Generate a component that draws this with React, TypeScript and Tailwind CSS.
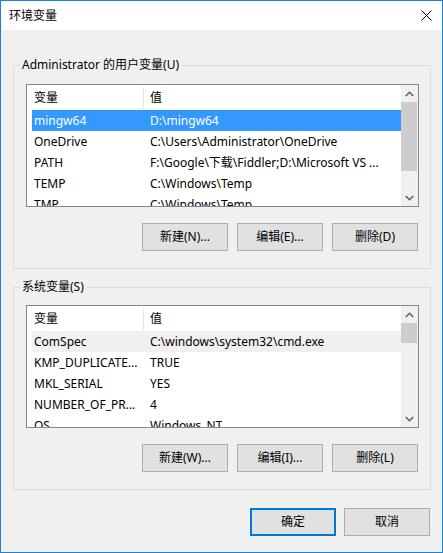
import React from "react";

const FONT = "font-['Segoe_UI','Noto_Sans','Noto_Sans_CJK_SC',sans-serif]";

type Row = { name: string; value: string; state?: "sel" | "hover" };

function Chevron({ up }: { up?: boolean }) {
  return (
    <svg width="9" height="6" viewBox="0 0 9 6" className="block">
      {up ? (
        <polyline points="0.8,5 4.5,1.3 8.2,5" fill="none" stroke="#606060" strokeWidth="1.6" />
      ) : (
        <polyline points="0.8,1 4.5,4.7 8.2,1" fill="none" stroke="#606060" strokeWidth="1.6" />
      )}
    </svg>
  );
}

function ListView({ rows, thumbH }: { rows: Row[]; thumbH: number }) {
  return (
    <div className="h-[123px] border border-[#828790] bg-white flex overflow-hidden">
      <div className="flex-1 min-w-0 overflow-hidden pl-[5px]">
        <div className="h-[25px] flex items-center">
          <div className="w-[111px] pl-[2px] whitespace-nowrap">变量</div>
          <div className="w-px h-[22px] bg-[#e5e5e5]" />
          <div className="pl-[6px] whitespace-nowrap">值</div>
        </div>
        {rows.map((r, i) => (
          <div
            key={i}
            className={
              "h-[21px] flex items-center " +
              (r.state === "sel"
                ? "bg-[#3399ff] text-white"
                : r.state === "hover"
                ? "bg-[#f0f0f0]"
                : "")
            }
          >
            <div className="w-[112px] shrink-0 pl-[2px] whitespace-nowrap overflow-hidden">{r.name}</div>
            <div className="pl-[6px] whitespace-nowrap overflow-hidden">{r.value}</div>
          </div>
        ))}
      </div>
      <div className="w-[17px] bg-[#f0f0f0] flex flex-col shrink-0">
        <div className="h-[17px] flex items-center justify-center">
          <Chevron up />
        </div>
        <div className="bg-[#cdcdcd] mr-[1px]" style={{ height: thumbH }} />
        <div className="flex-1" />
        <div className="h-[17px] flex items-center justify-center">
          <Chevron />
        </div>
      </div>
    </div>
  );
}

function Btn({ children, primary }: { children: React.ReactNode; primary?: boolean }) {
  return (
    <div
      className={
        "w-[86px] h-[28px] bg-[#e1e1e1] flex items-center justify-center whitespace-nowrap " +
        (primary ? "border-2 border-[#0078d7]" : "border border-[#adadad]")
      }
    >
      {children}
    </div>
  );
}

function Group({
  label,
  labelW,
  rows,
  thumbH,
  buttons,
  pt,
}: {
  label: string;
  labelW?: number;
  rows: Row[];
  thumbH: number;
  buttons: string[];
  pt: string;
}) {
  return (
    <div className={"relative border border-[#dcdcdc] pl-[12px] pr-[11px] pb-[17px] " + pt}>
      <div className="absolute left-[6px] top-[-9px] h-[16px] leading-[16px] px-[2px] bg-[#f0f0f0] whitespace-nowrap">
        {label}
      </div>
      <ListView rows={rows} thumbH={thumbH} />
      <div className="mt-[16px] flex justify-end gap-[9px] pr-[1px]">
        {buttons.map((b) => (
          <Btn key={b}>{b}</Btn>
        ))}
      </div>
    </div>
  );
}

export default function App() {
  const userRows: Row[] = [
    { name: "mingw64", value: "D:\\mingw64", state: "sel" },
    { name: "OneDrive", value: "C:\\Users\\Administrator\\OneDrive" },
    { name: "PATH", value: "F:\\Google\\下载\\Fiddler;D:\\Microsoft VS ..." },
    { name: "TEMP", value: "C:\\Windows\\Temp" },
    { name: "TMP", value: "C:\\Windows\\Temp" },
  ];
  const sysRows: Row[] = [
    { name: "ComSpec", value: "C:\\windows\\system32\\cmd.exe", state: "hover" },
    { name: "KMP_DUPLICATE...", value: "TRUE" },
    { name: "MKL_SERIAL", value: "YES" },
    { name: "NUMBER_OF_PR...", value: "4" },
    { name: "OS", value: "Windows_NT" },
  ];
  return (
    <div className={"w-[443px] h-[553px] border border-[#1883d7] bg-[#f0f0f0] flex flex-col text-[12px] text-black " + FONT}>
      <div className="h-[29px] bg-white flex items-center justify-between pl-[8px] pr-[10px]">
        <span className="text-[12px]">环境变量</span>
        <svg width="11" height="11" viewBox="0 0 11 11">
          <path d="M0.5 0.5 L10.5 10.5 M10.5 0.5 L0.5 10.5" stroke="#000" strokeWidth="1" />
        </svg>
      </div>
      <div className="flex flex-col pl-[12px] pr-[11px] pt-[35px]">
        <Group
          label="Administrator 的用户变量(U)"
          rows={userRows}
          thumbH={69}
          buttons={["新建(N)...", "编辑(E)...", "删除(D)"]}
          pt="pt-[18px]"
        />
        <div className="h-[18px]" />
        <Group
          label="系统变量(S)"
          rows={sysRows}
          thumbH={20}
          buttons={["新建(W)...", "编辑(I)...", "删除(L)"]}
          pt="pt-[17px]"
        />
        <div className="mt-[18px] flex justify-end gap-[8px] pr-[1px]">
          <Btn primary>确定</Btn>
          <Btn>取消</Btn>
        </div>
      </div>
    </div>
  );
}
